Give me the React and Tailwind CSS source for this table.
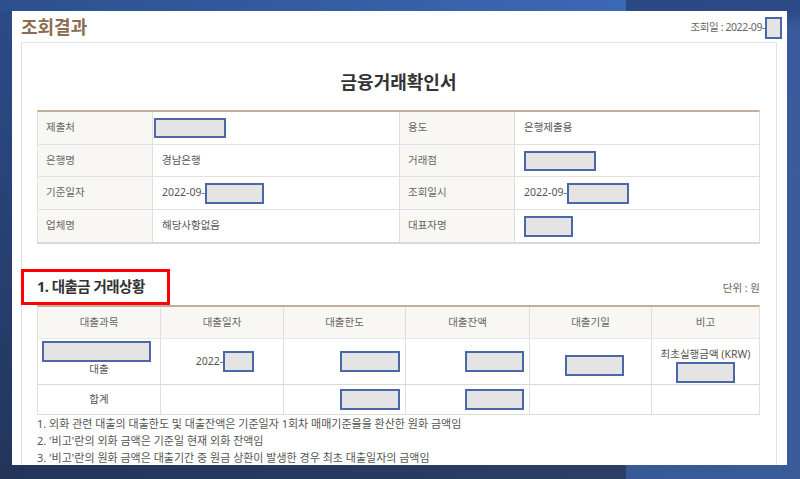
import React from 'react';

// gray placeholder box used where the original values were masked
function Mask({ className }) {
    return <span className={`inline-block shrink-0 bg-[#e4e4e4] border-2 border-[#4a68a8] ${className}`} />;
}

export default function App() {
    const infoRows = [
        {
            h: 'h-[33px]',
            l1: '제출처',
            v1: <Mask className="w-[72px] h-[20px] -ml-[8px]" />,
            l2: '용도',
            v2: '은행제출용',
        },
        {
            h: 'h-[32px]',
            l1: '은행명',
            v1: '경남은행',
            l2: '거래점',
            v2: <Mask className="w-[72px] h-[20px]" />,
        },
        {
            h: 'h-[33px]',
            l1: '기준일자',
            v1: <>2022-09-<Mask className="w-[59px] h-[21px]" /></>,
            l2: '조회일시',
            v2: <>2022-09-<Mask className="w-[62px] h-[21px]" /></>,
        },
        {
            h: 'h-[32px]',
            l1: '업체명',
            v1: '해당사항없음',
            l2: '대표자명',
            v2: <Mask className="w-[49px] h-[21px]" />,
        },
    ];

    const headers = ['대출과목', '대출일자', '대출한도', '대출잔액', '대출기일', '비고'];

    const notes = [
        '1. 외화 관련 대출의 대출한도 및 대출잔액은 기준일자 1회차 매매기준율을 환산한 원화 금액임',
        "2. '비고'란의 외화 금액은 기준일 현재 외화 잔액임",
        "3. '비고'란의 원화 금액은 대출기간 중 원금 상환이 발생한 경우 최초 대출일자의 금액임",
    ];

    return (
        <div className="w-[800px] h-[479px] overflow-hidden flex flex-col font-['Noto_Sans','Noto_Sans_CJK_KR',sans-serif] text-[10.5px] text-[#555]">
            {/* desktop behind the window */}
            <div className="h-[11px] shrink-0 bg-[linear-gradient(90deg,#2d4f8d_0%,#3c69b5_78.2%,#2b4a84_78.3%,#2c4b86_100%)]" />

            <div className="flex h-[454px] shrink-0">
                <div className="w-[12px] shrink-0 bg-[linear-gradient(180deg,#2b4b88,#22365c)]" />

                {/* window */}
                <div className="w-[775px] shrink-0 bg-white overflow-hidden flex flex-col">
                    {/* Header */}
                    <div className="h-[31px] shrink-0 flex items-center justify-between pl-[9px] pr-[5px]">
                        <h1 className="text-[18px] font-bold text-[#8d6c50] pt-[1px]">조회결과</h1>
                        <div className="flex items-center pt-[2px] text-[#666] tracking-[-0.4px]">
                            <span>조회일 : 2022-09-</span>
                            <Mask className="w-[17px] h-[22px]" />
                        </div>
                    </div>

                    {/* Document */}
                    <div className="ml-[9px] w-[756px] h-[600px] shrink-0 border border-[#e2e2e2] pl-[15px] pr-[16px]">
                        <div className="h-[67px] pt-[11px] flex items-center justify-center">
                            <h2 className="text-[18px] font-bold text-[#333]">금융거래확인서</h2>
                        </div>

                        {/* Info table */}
                        <div className="border-t-2 border-t-[#c2ae9b] border-x border-x-[#e0e0e0] border-b-2 border-b-[#d9d9d9]">
                            {infoRows.map((row, i) => (
                                <div
                                    key={i}
                                    className={`grid grid-cols-[115px_247px_115px_1fr] ${row.h} ${i < 3 ? 'border-b border-[#e0e0e0]' : ''}`}
                                >
                                    <div className="bg-[#f8f7f4] border-r border-[#dedede] pl-[8px] flex items-center text-[#666]">{row.l1}</div>
                                    <div className="border-r border-[#dedede] pl-[9px] flex items-center">{row.v1}</div>
                                    <div className="bg-[#f8f7f4] border-r border-[#dedede] pl-[8px] flex items-center text-[#666]">{row.l2}</div>
                                    <div className="pl-[9px] flex items-center">{row.v2}</div>
                                </div>
                            ))}
                        </div>

                        {/* Section heading */}
                        <div className="mt-[25px] h-[36px] flex items-center justify-between">
                            <div className="-ml-[16px] w-[149px] h-[36px] border-[3px] border-[#ff0000] pl-[13px] flex items-center">
                                <h3 className="text-[14.5px] font-bold text-[#333] tracking-[-0.5px]">1. 대출금 거래상황</h3>
                            </div>
                            <span className="pt-[4px] text-[#666]">단위 : 원</span>
                        </div>

                        {/* Loan table */}
                        <div className="border-t-2 border-t-[#c2ae9b] border-x border-x-[#e0e0e0] border-b border-b-[#d9d9d9]">
                            <div className="grid grid-cols-[123px_123px_122px_124px_122px_1fr] h-[32px] bg-[#f8f7f4] border-b border-[#e6e6e6]">
                                {headers.map((h, i) => (
                                    <div
                                        key={h}
                                        className={`flex items-center justify-center text-[#666] ${i < 5 ? 'border-r border-[#dedede]' : ''}`}
                                    >
                                        {h}
                                    </div>
                                ))}
                            </div>

                            <div className="grid grid-cols-[123px_123px_122px_124px_122px_1fr] h-[46px] border-b border-[#d9d9d9]">
                                <div className="border-r border-[#dedede] pt-[2px] pl-[4px] flex flex-col">
                                    <Mask className="w-[109px] h-[21px]" />
                                    <span className="leading-[15px] text-center pr-[4px]">대출</span>
                                </div>
                                <div className="border-r border-[#dedede] flex items-center justify-center pl-[6px]">
                                    <span>2022-</span>
                                    <Mask className="w-[31px] h-[21px]" />
                                </div>
                                <div className="border-r border-[#dedede] flex items-center justify-end pr-[5px]">
                                    <Mask className="w-[60px] h-[21px]" />
                                </div>
                                <div className="border-r border-[#dedede] flex items-center justify-end pr-[5px]">
                                    <Mask className="w-[59px] h-[21px]" />
                                </div>
                                <div className="border-r border-[#dedede] flex items-center justify-center pl-[7px] pt-[7px]">
                                    <Mask className="w-[59px] h-[21px]" />
                                </div>
                                <div className="flex flex-col items-center pt-[8px]">
                                    <span className="leading-[15px]">최초실행금액 (KRW)</span>
                                    <Mask className="w-[59px] h-[21px]" />
                                </div>
                            </div>

                            <div className="grid grid-cols-[123px_123px_122px_124px_122px_1fr] h-[29px]">
                                <div className="border-r border-[#dedede] flex items-center justify-center">합계</div>
                                <div className="border-r border-[#dedede]" />
                                <div className="border-r border-[#dedede] flex items-center justify-end pr-[5px]">
                                    <Mask className="w-[60px] h-[21px]" />
                                </div>
                                <div className="border-r border-[#dedede] flex items-center justify-end pr-[5px]">
                                    <Mask className="w-[59px] h-[21px]" />
                                </div>
                                <div className="border-r border-[#dedede]" />
                                <div />
                            </div>
                        </div>

                        {/* Notes */}
                        <div className="text-[11px] leading-[17px]">
                            {notes.map((n) => (
                                <p key={n}>{n}</p>
                            ))}
                        </div>
                    </div>
                </div>

                <div className="flex-1 bg-[linear-gradient(180deg,#2c4b86_0%,#395a9c_4%,#3a5b9a_100%)]" />
            </div>

            <div className="h-[14px] shrink-0 bg-[linear-gradient(90deg,#223559_0%,#2b3f62_78.2%,#385896_78.3%,#3a5a98_100%)]" />
        </div>
    );
}
